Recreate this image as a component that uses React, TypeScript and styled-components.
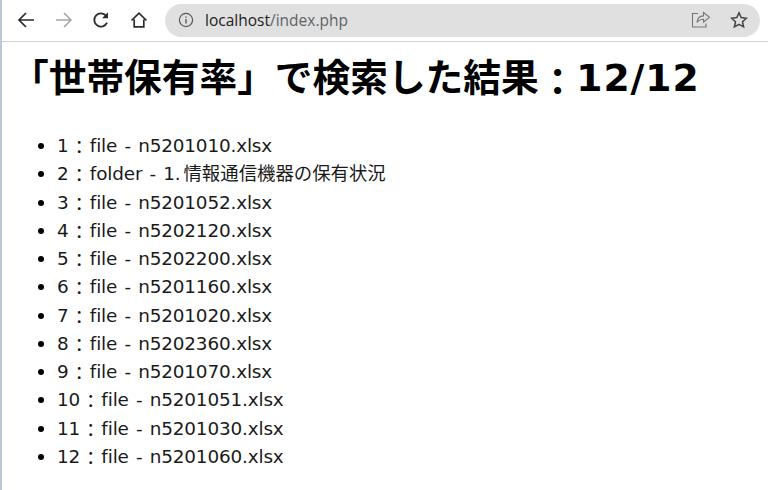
import React from 'react'
import styled, { createGlobalStyle } from 'styled-components'

const Global = createGlobalStyle`
    html, body { margin: 0; padding: 0; background: #fff; }
    body { width: 768px; height: 490px; overflow: hidden; }
`
const Frame = styled.div`
    width: 768px;
    height: 490px;
    box-sizing: border-box;
    border-left: 2px solid #bcc6d6;
    display: flex;
    flex-direction: column;
`
const Toolbar = styled.div`
    height: 42px;
    box-sizing: border-box;
    flex: none;
    border-bottom: 1px solid #d3d3d5;
    display: flex;
    align-items: center;
    padding: 0 8px 1px 14px;
    background: #fff;
`
const NavButton = styled.div<{ $gap?: number }>`
    width: 20px;
    height: 20px;
    margin-right: ${p => p.$gap ?? 17.7}px;
    display: flex;
    align-items: center;
    justify-content: center;
    flex: none;
`
const AddressBar = styled.div`
    flex: 1;
    height: 33px;
    border-radius: 17px;
    background: #e0e0e0;
    display: flex;
    align-items: center;
    padding: 0 10px 0 13px;
`
const Url = styled.div`
    margin-left: 11px;
    flex: 1;
    font: 15.5px "Open Sans", "Noto Sans", sans-serif;
    color: #5f6368;
    b { font-weight: 400; color: #202124; }
`
const BarIcon = styled.div`
    width: 22px;
    height: 22px;
    margin-left: 16px;
    display: flex;
    align-items: center;
    justify-content: center;
`
const Page = styled.main`
    flex: 1;
    padding: 9px 0 0 9px;
    color: #1a1a1a;
    font-family: "DejaVu Sans", "Noto Sans CJK JP", sans-serif;
`
const Title = styled.h1`
    margin: 0 0 28px;
    font-size: 37.7px;
    line-height: 47px;
    font-weight: 700;
    color: #000;
    white-space: nowrap;
    font-family: "DejaVu Sans", "Noto Sans CJK JP", sans-serif;
`
const Count = styled.span`
    letter-spacing: 0.9px;
`
const Colon = styled.span<{ $drop: number; $side?: number }>`
    display: inline-block;
    margin: 0 ${p => p.$side ?? 0}px;
    font-family: "Noto Sans CJK JP", sans-serif;
    transform: translateY(${p => p.$drop}px);
`
const Results = styled.ul`
    margin: 0;
    padding: 0 0 0 46px;
    list-style: disc;
`
const Result = styled.li`
    height: 28.27px;
    line-height: 28px;
    font-size: 18.4px;
    letter-spacing: -0.15px;
    word-spacing: 1.5px;
    white-space: nowrap;
    &::marker { color: #000; font-size: 20px; }
`
const Jp = styled.span`
    margin-left: 3px;
    font-family: "Noto Sans CJK JP", sans-serif;
    letter-spacing: 0;
`

const rows = [
    ['file', 'n5201010.xlsx'],
    ['folder', '1.情報通信機器の保有状況'],
    ['file', 'n5201052.xlsx'],
    ['file', 'n5202120.xlsx'],
    ['file', 'n5202200.xlsx'],
    ['file', 'n5201160.xlsx'],
    ['file', 'n5201020.xlsx'],
    ['file', 'n5202360.xlsx'],
    ['file', 'n5201070.xlsx'],
    ['file', 'n5201051.xlsx'],
    ['file', 'n5201030.xlsx'],
    ['file', 'n5201060.xlsx'],
]

const Back = ({ color }: { color: string }) => (
    <svg width="18" height="18" viewBox="0 0 18 18" fill="none" stroke={color} strokeWidth="1.7">
        <path d="M17 9H2M9 2L2 9l7 7" />
    </svg>
)
const Forward = ({ color }: { color: string }) => (
    <svg width="18" height="18" viewBox="0 0 18 18" fill="none" stroke={color} strokeWidth="1.5">
        <path d="M1 9h15M9 2l7 7-7 7" />
    </svg>
)

const App = () => {
    return (
        <Frame>
            <Global />
            <Toolbar>
                <NavButton><Back color="#2b2b2b" /></NavButton>
                <NavButton><Forward color="#a5a5a5" /></NavButton>
                <NavButton>
                    <svg width="18" height="18" viewBox="0 0 18 18" fill="none" stroke="#2b2b2b" strokeWidth="1.8">
                        <path d="M15 11.6A6.6 6.6 0 1 1 14.2 5" />
                        <path d="M16 1.2v6h-6" fill="#2b2b2b" stroke="none" />
                    </svg>
                </NavButton>
                <NavButton $gap={16}>
                    <svg width="18" height="18" viewBox="0 0 18 18" fill="none" stroke="#2b2b2b" strokeWidth="1.7">
                        <path d="M1.5 9.5L9 2.2l7.5 7.3M4.2 8.5v7.3h9.6V8.5" />
                    </svg>
                </NavButton>
                <AddressBar>
                    <svg width="16" height="16" viewBox="0 0 16 16" fill="none" stroke="#5a5a5a" strokeWidth="1.2">
                        <circle cx="8" cy="8" r="6.6" />
                        <path d="M8 7v4.4M8 4.4v1.4" strokeWidth="1.4" />
                    </svg>
                    <Url><b>localhost</b>/index.php</Url>
                    <BarIcon>
                        <svg width="20" height="18" viewBox="0 0 20 18" fill="none" stroke="#777" strokeWidth="1.1">
                            <path d="M7 2.5H1.5v13.5h13.5v-3.5" />
                            <path d="M12.5 1.5l6 4.8-6 4.7V8.2c-3 0-5 .8-6.5 3.3.3-3.8 2.8-6.5 6.5-6.6z" />
                        </svg>
                    </BarIcon>
                    <BarIcon>
                        <svg width="18" height="18" viewBox="0 0 18 18" fill="none" stroke="#444" strokeWidth="1.5">
                            <path d="M9 1.8l2.2 4.8 5.2.6-3.9 3.5 1.1 5.2L9 13.3l-4.6 2.6 1.1-5.2-3.9-3.5 5.2-.6z" />
                        </svg>
                    </BarIcon>
                </AddressBar>
            </Toolbar>
            <Page>
                <Title>「世帯保有率」で検索した結果<Colon $drop={4}>：</Colon><Count>12/12</Count></Title>
                <Results>
                    {rows.map(([kind, name], i) => (
                        <Result key={i}>
                            {i + 1}<Colon $drop={2} $side={1.5}>：</Colon>{kind} - {kind === 'folder' ? <>1.<Jp>{name.slice(2)}</Jp></> : name}
                        </Result>
                    ))}
                </Results>
            </Page>
        </Frame>
    )
}

export default App
